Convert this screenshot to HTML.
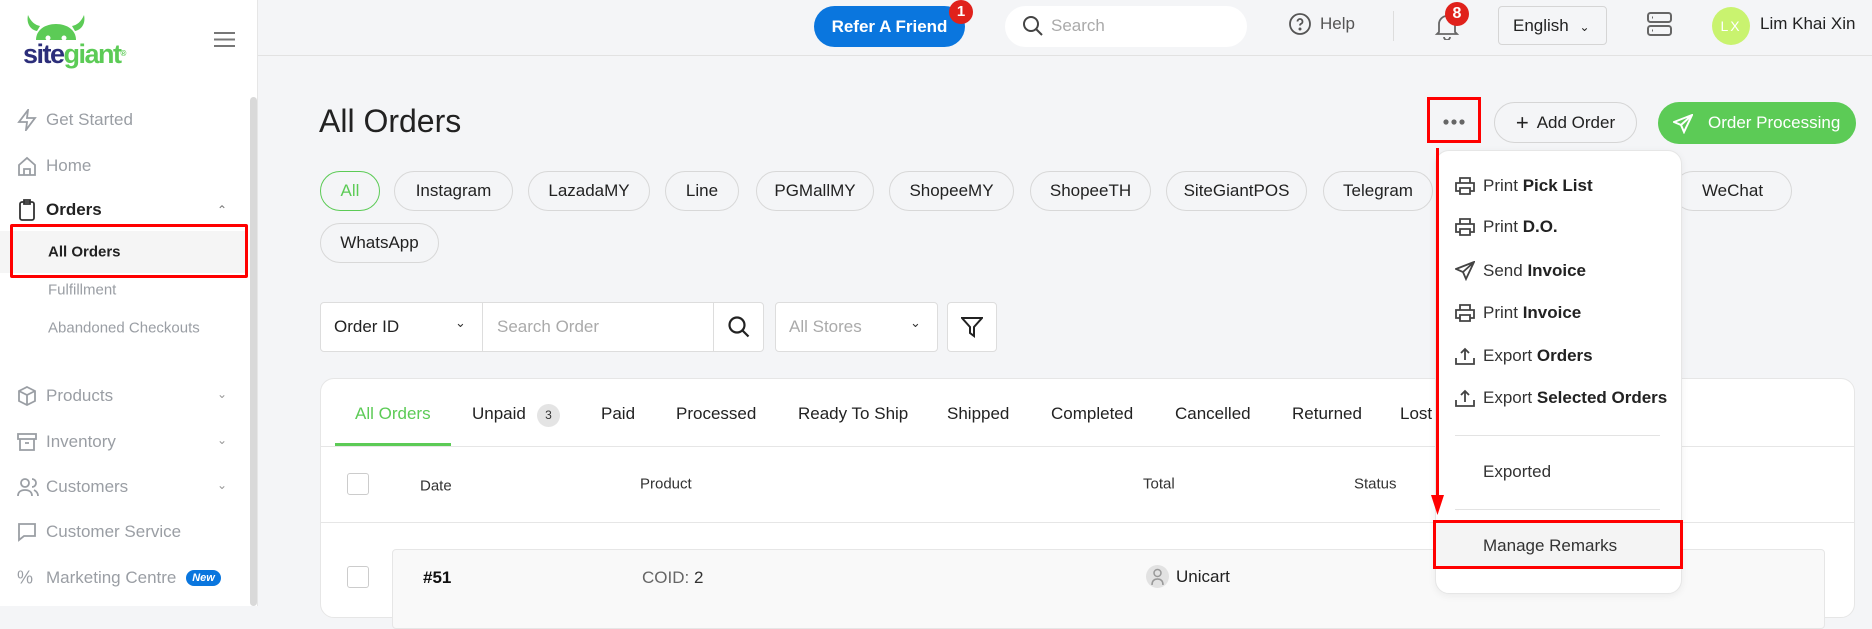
<!DOCTYPE html>
<html><head><meta charset="utf-8"><style>
*{box-sizing:border-box;margin:0;padding:0}
body{width:1872px;height:606px;overflow:hidden;background:#f4f5f7;font-family:"Liberation Sans",sans-serif;color:#222;position:relative}
.abs{position:absolute}
.side{left:0;top:0;width:258px;height:606px;background:#fff;border-right:1px solid #e6e6e6}
.mi{position:absolute;left:46px;font-size:17px;color:#9a9ea4;transform:translateY(-50%)}
.ic{position:absolute;left:17px;transform:translateY(-50%)}
.sub{position:absolute;left:48px;font-size:15px;color:#9a9ea4;transform:translateY(-50%)}
.chev{position:absolute;left:217px;transform:translateY(-50%)}
.chip{position:absolute;height:40px;top:171px;border:1px solid #d8d8d8;border-radius:20px;font-size:17px;line-height:38px;text-align:center;color:#222;background:#f4f5f7}
.tab{position:absolute;top:414px;transform:translateY(-50%);font-size:17px;color:#222}
.th{position:absolute;top:484px;transform:translateY(-50%);font-size:15px;color:#333}
.dd{position:absolute;left:1483px;font-size:17px;color:#333;transform:translateY(-50%)}
.dd b{color:#222}
.di{position:absolute;left:1455px;transform:translateY(-50%)}
.cb{position:absolute;width:22px;height:22px;border:1px solid #ccc;border-radius:3px;background:#fff}
</style></head><body>
<!-- header -->
<div class="abs" style="left:258px;top:0;width:1614px;height:56px;border-bottom:1px solid #e2e2e2;background:#f4f5f7"></div>
<div class="abs" style="left:814px;top:6px;width:151px;height:41px;background:#0a76de;border-radius:21px;color:#fff;font-size:17px;font-weight:bold;line-height:41px;text-align:center">Refer A Friend</div>
<div class="abs" style="left:949px;top:0px;width:24px;height:24px;background:#e0211b;border-radius:50%;color:#fff;font-size:15px;font-weight:bold;text-align:center;line-height:24px">1</div>
<div class="abs" style="left:1005px;top:6px;width:242px;height:41px;background:#fff;border-radius:21px"></div>
<svg class="abs" style="left:1021px;top:14px" width="24" height="24" viewBox="0 0 24 24" fill="none" stroke="#444" stroke-width="2"><circle cx="10" cy="10" r="7"/><path d="M15 15l6 6"/></svg>
<div class="abs" style="left:1051px;top:16px;font-size:17px;color:#aaa">Search</div>
<svg class="abs" style="left:1288px;top:12px" width="24" height="24" viewBox="0 0 24 24" fill="none" stroke="#555" stroke-width="1.8"><circle cx="12" cy="12" r="10"/><path d="M9.5 9.5a2.5 2.5 0 1 1 3.5 2.3c-.7.3-1 .9-1 1.7"/><circle cx="12" cy="17" r=".6" fill="#555"/></svg>
<div class="abs" style="left:1320px;top:14px;font-size:17px;color:#555">Help</div>
<div class="abs" style="left:1393px;top:11px;width:1px;height:30px;background:#ddd"></div>
<svg class="abs" style="left:1434px;top:12px" width="26" height="28" viewBox="0 0 26 28" fill="none" stroke="#666" stroke-width="1.8"><path d="M5 20V12a8 8 0 0 1 16 0v8l2 2H3z"/><path d="M10 25a3 3 0 0 0 6 0"/></svg>
<div class="abs" style="left:1445px;top:2px;width:24px;height:24px;background:#e0211b;border-radius:50%;color:#fff;font-size:16px;font-weight:bold;text-align:center;line-height:24px">8</div>
<div class="abs" style="left:1498px;top:6px;width:109px;height:39px;border:1px solid #d5d5d5;border-radius:4px;font-size:17px;line-height:37px;padding-left:14px;color:#222">English <span style="font-size:12px;margin-left:6px">&#8964;</span></div>
<svg class="abs" style="left:1647px;top:12px" width="25" height="24" viewBox="0 0 25 24" fill="none" stroke="#666" stroke-width="2"><rect x="1" y="1" width="23" height="9" rx="2.5"/><rect x="1" y="14" width="23" height="9" rx="2.5"/><path d="M5 5.5h1M5 18.5h1"/></svg>
<div class="abs" style="left:1712px;top:7px;width:38px;height:38px;border-radius:50%;background:#c9f36f;color:#fff;font-size:14px;line-height:38px;text-align:center;letter-spacing:2px">LX</div>
<div class="abs" style="left:1760px;top:14px;font-size:17px;color:#222">Lim Khai Xin</div>

<!-- sidebar -->
<div class="abs side"></div>
<svg class="abs" style="left:26px;top:14px" width="60" height="40" viewBox="0 0 60 40"><path d="M2 1c-2 9 3 15 9 16l3-5C9 11 5 8 2 1zM58 1c2 9-3 15-9 16l-3-5c5-1 9-4 12-11z" fill="#5ccb56"/><path d="M10 26c0-10 9-16 20-16s20 6 20 16v12H10z" fill="#5ccb56"/><circle cx="22" cy="24" r="2.5" fill="#fff"/><circle cx="38" cy="24" r="2.5" fill="#fff"/></svg>
<div class="abs" style="left:22px;top:40px;font-size:27px;font-weight:bold;letter-spacing:-1.5px;line-height:28px;background:#fff;padding:0 1px"><span style="color:#2c2e7a">site</span><span style="color:#5ccb56">giant</span><span style="color:#5ccb56;font-size:8px;vertical-align:top">®</span></div>
<svg class="abs" style="left:214px;top:32px" width="21" height="15" viewBox="0 0 21 15" stroke="#777" stroke-width="2"><path d="M0 1h21M0 7.5h21M0 14h21"/></svg>
<div class="abs" style="left:250px;top:97px;width:7px;height:509px;background:#d9d9d9;border-radius:4px"></div>

<svg class="ic" style="top:120px" width="20" height="22" viewBox="0 0 20 22" fill="none" stroke="#9a9ea4" stroke-width="1.8"><path d="M11 1L2 13h8l-1 8 9-12h-8z"/></svg>
<div class="mi" style="top:120px">Get Started</div>
<svg class="ic" style="top:166px" width="20" height="20" viewBox="0 0 20 20" fill="none" stroke="#9a9ea4" stroke-width="1.8"><path d="M2 9l8-7 8 7v10H2z"/><path d="M7 19v-6h6v6"/></svg>
<div class="mi" style="top:166px">Home</div>
<svg class="ic" style="top:210px" width="20" height="22" viewBox="0 0 20 22" fill="none" stroke="#333" stroke-width="1.8"><rect x="3" y="3" width="14" height="18" rx="2"/><path d="M7 1h6v4H7z"/></svg>
<div class="mi" style="top:210px;color:#222;font-weight:bold">Orders</div>
<div class="chev" style="top:210px;font-size:12px;color:#777">&#8963;</div>
<div class="abs" style="left:0;top:231px;width:248px;height:42px;background:#f5f5f5"></div>
<div class="abs" style="left:10px;top:224px;width:238px;height:54px;border:3px solid #ff0000;border-radius:2px"></div>
<div class="sub" style="top:252px;color:#222;font-weight:bold">All Orders</div>
<div class="sub" style="top:290px">Fulfillment</div>
<div class="sub" style="top:328px">Abandoned Checkouts</div>

<svg class="ic" style="top:396px" width="20" height="20" viewBox="0 0 20 20" fill="none" stroke="#9a9ea4" stroke-width="1.8"><path d="M10 1l8 4v10l-8 4-8-4V5z"/><path d="M2 5l8 4 8-4M10 9v10"/></svg>
<div class="mi" style="top:396px">Products</div><div class="chev" style="top:394px;font-size:12px;color:#999">&#8964;</div>
<svg class="ic" style="top:442px" width="20" height="20" viewBox="0 0 20 20" fill="none" stroke="#9a9ea4" stroke-width="1.8"><rect x="1" y="2" width="18" height="5"/><path d="M3 7v11h14V7M8 11h4"/></svg>
<div class="mi" style="top:442px">Inventory</div><div class="chev" style="top:440px;font-size:12px;color:#999">&#8964;</div>
<svg class="ic" style="top:487px" width="22" height="20" viewBox="0 0 22 20" fill="none" stroke="#9a9ea4" stroke-width="1.8"><circle cx="8" cy="6" r="4"/><path d="M1 19c0-4 3-6 7-6s7 2 7 6M15 2a4 4 0 0 1 0 8M17 13c2 1 4 3 4 6"/></svg>
<div class="mi" style="top:487px">Customers</div><div class="chev" style="top:485px;font-size:12px;color:#999">&#8964;</div>
<svg class="ic" style="top:532px" width="20" height="20" viewBox="0 0 20 20" fill="none" stroke="#9a9ea4" stroke-width="1.8"><path d="M2 2h16v12H7l-5 4z"/></svg>
<div class="mi" style="top:532px">Customer Service</div>
<div class="ic" style="top:578px;font-size:18px;color:#9a9ea4">%</div>
<div class="mi" style="top:578px">Marketing Centre</div>
<div class="abs" style="left:186px;top:570px;width:35px;height:16px;background:#0a76de;border-radius:8px;color:#fff;font-size:11px;font-weight:bold;line-height:16px;text-align:center;font-style:italic">New</div>

<!-- main -->
<div class="abs" style="left:319px;top:103px;font-size:32px;color:#222">All Orders</div>
<div class="abs" style="left:1427px;top:97px;width:54px;height:46px;border:3px solid #ff0000"></div>
<svg class="abs" style="left:1443px;top:119px" width="22" height="6" viewBox="0 0 22 6" fill="#666"><circle cx="3" cy="3" r="2.6"/><circle cx="11" cy="3" r="2.6"/><circle cx="19" cy="3" r="2.6"/></svg>
<div class="abs" style="left:1494px;top:102px;width:143px;height:41px;border:1px solid #d5d5d5;border-radius:21px;font-size:17px;line-height:39px;text-align:center;color:#222"><span style="font-size:22px;vertical-align:-2px;margin-right:8px">+</span>Add Order</div>
<div class="abs" style="left:1658px;top:102px;width:198px;height:42px;background:#5ccb56;border-radius:21px;color:#fff;font-size:17px;line-height:42px;padding-left:50px">Order Processing</div>
<svg class="abs" style="left:1673px;top:114px" width="20" height="20" viewBox="0 0 20 20" fill="none" stroke="#fff" stroke-width="2"><path d="M19 1L1 8l7 3 3 7zM19 1L8 11"/></svg>

<div class="chip" style="left:320px;width:60px;border-color:#5ccb56;color:#5ccb56">All</div>
<div class="chip" style="left:394px;width:119px">Instagram</div>
<div class="chip" style="left:528px;width:122px">LazadaMY</div>
<div class="chip" style="left:665px;width:74px">Line</div>
<div class="chip" style="left:756px;width:118px">PGMallMY</div>
<div class="chip" style="left:889px;width:125px">ShopeeMY</div>
<div class="chip" style="left:1030px;width:121px">ShopeeTH</div>
<div class="chip" style="left:1166px;width:141px">SiteGiantPOS</div>
<div class="chip" style="left:1323px;width:110px">Telegram</div>
<div class="chip" style="left:1673px;width:119px">WeChat</div>
<div class="chip" style="left:320px;top:223px;width:119px">WhatsApp</div>

<div class="abs" style="left:320px;top:302px;width:444px;height:50px;background:#fff;border:1px solid #ddd;border-radius:4px"></div>
<div class="abs" style="left:482px;top:302px;width:1px;height:50px;background:#ddd"></div>
<div class="abs" style="left:713px;top:302px;width:1px;height:50px;background:#ddd"></div>
<div class="abs" style="left:334px;top:317px;font-size:17px;color:#222">Order ID</div>
<div class="abs" style="left:455px;top:315px;font-size:13px;color:#333">&#8964;</div>
<div class="abs" style="left:497px;top:317px;font-size:17px;color:#aaa">Search Order</div>
<svg class="abs" style="left:727px;top:315px" width="24" height="24" viewBox="0 0 24 24" fill="none" stroke="#222" stroke-width="2.2"><circle cx="10" cy="10" r="7.5"/><path d="M15.5 15.5l6 6"/></svg>
<div class="abs" style="left:775px;top:302px;width:163px;height:50px;background:#fff;border:1px solid #ddd;border-radius:4px"></div>
<div class="abs" style="left:789px;top:317px;font-size:17px;color:#aaa">All Stores</div>
<div class="abs" style="left:910px;top:315px;font-size:13px;color:#333">&#8964;</div>
<div class="abs" style="left:947px;top:302px;width:50px;height:50px;background:#fff;border:1px solid #ddd;border-radius:4px"></div>
<svg class="abs" style="left:961px;top:316px" width="22" height="22" viewBox="0 0 22 22" fill="none" stroke="#222" stroke-width="2"><path d="M1 2h20l-8 9v9l-4-3v-6z"/></svg>

<div class="abs" style="left:320px;top:378px;width:1535px;height:240px;background:#fff;border:1px solid #e6e6e6;border-radius:14px"></div>
<div class="abs" style="left:321px;top:446px;width:1533px;height:1px;background:#e6e6e6"></div>
<div class="abs" style="left:335px;top:443px;width:116px;height:3px;background:#5ccb56"></div>
<div class="tab" style="left:355px;color:#5ccb56">All Orders</div>
<div class="tab" style="left:472px">Unpaid</div>
<div class="abs" style="left:537px;top:404px;width:23px;height:23px;border-radius:50%;background:#e4e4e4;font-size:12px;line-height:23px;text-align:center;color:#333">3</div>
<div class="tab" style="left:601px">Paid</div>
<div class="tab" style="left:676px">Processed</div>
<div class="tab" style="left:798px">Ready To Ship</div>
<div class="tab" style="left:947px">Shipped</div>
<div class="tab" style="left:1051px">Completed</div>
<div class="tab" style="left:1175px">Cancelled</div>
<div class="tab" style="left:1292px">Returned</div>
<div class="tab" style="left:1400px">Lost</div>
<div class="cb" style="left:347px;top:473px"></div>
<div class="th" style="left:420px;top:486px">Date</div>
<div class="th" style="left:640px">Product</div>
<div class="th" style="left:1143px">Total</div>
<div class="th" style="left:1354px">Status</div>
<div class="abs" style="left:321px;top:522px;width:1533px;height:1px;background:#e6e6e6"></div>
<div class="abs" style="left:392px;top:549px;width:1433px;height:80px;background:#f9f9f9;border:1px solid #e6e6e6;border-radius:4px"></div>
<div class="cb" style="left:347px;top:566px"></div>
<div class="abs" style="left:423px;top:568px;font-size:17px;font-weight:bold;color:#111">#51</div>
<div class="abs" style="left:642px;top:568px;font-size:17px;color:#333"><span style="color:#666">COID:</span> 2</div>
<div class="abs" style="left:1146px;top:565px;width:23px;height:23px;border-radius:50%;background:#e2e2e2"></div>
<svg class="abs" style="left:1150px;top:568px" width="15" height="17" viewBox="0 0 15 17" fill="none" stroke="#999" stroke-width="1.5"><circle cx="7.5" cy="5" r="3.5"/><path d="M2 17c0-4 2-6 5.5-6s5.5 2 5.5 6"/></svg>
<div class="abs" style="left:1176px;top:567px;font-size:17px;color:#222">Unicart</div>

<!-- dropdown -->
<div class="abs" style="left:1435px;top:150px;width:247px;height:444px;background:#fff;border:1px solid #e6e6e6;border-radius:14px;box-shadow:0 2px 8px rgba(0,0,0,.06)"></div>
<svg class="di" style="top:186px" width="20" height="18" viewBox="0 0 20 18" fill="none" stroke="#444" stroke-width="1.8"><path d="M5 6V1h10v5M5 14H1V6h18v8h-4M5 11h10v6H5z"/></svg>
<div class="dd" style="top:186px">Print <b>Pick List</b></div>
<svg class="di" style="top:227px" width="20" height="18" viewBox="0 0 20 18" fill="none" stroke="#444" stroke-width="1.8"><path d="M5 6V1h10v5M5 14H1V6h18v8h-4M5 11h10v6H5z"/></svg>
<div class="dd" style="top:227px">Print <b>D.O.</b></div>
<svg class="di" style="top:271px" width="20" height="20" viewBox="0 0 20 20" fill="none" stroke="#444" stroke-width="1.8"><path d="M19 1L1 8l7 3 3 7zM19 1L8 11"/></svg>
<div class="dd" style="top:271px">Send <b>Invoice</b></div>
<svg class="di" style="top:313px" width="20" height="18" viewBox="0 0 20 18" fill="none" stroke="#444" stroke-width="1.8"><path d="M5 6V1h10v5M5 14H1V6h18v8h-4M5 11h10v6H5z"/></svg>
<div class="dd" style="top:313px">Print <b>Invoice</b></div>
<svg class="di" style="top:356px" width="20" height="18" viewBox="0 0 20 18" fill="none" stroke="#444" stroke-width="1.8"><path d="M1 11v6h18v-6M10 13V2M6 6l4-4 4 4"/></svg>
<div class="dd" style="top:356px">Export <b>Orders</b></div>
<svg class="di" style="top:398px" width="20" height="18" viewBox="0 0 20 18" fill="none" stroke="#444" stroke-width="1.8"><path d="M1 11v6h18v-6M10 13V2M6 6l4-4 4 4"/></svg>
<div class="dd" style="top:398px">Export <b>Selected Orders</b></div>
<div class="abs" style="left:1455px;top:435px;width:205px;height:1px;background:#e3e3e3"></div>
<div class="dd" style="top:472px">Exported</div>
<div class="abs" style="left:1455px;top:509px;width:205px;height:1px;background:#e3e3e3"></div>
<div class="abs" style="left:1436px;top:522px;width:245px;height:46px;background:#f4f4f4"></div>
<div class="abs" style="left:1433px;top:520px;width:250px;height:49px;border:3px solid #ff0000"></div>
<div class="dd" style="top:546px">Manage Remarks</div>
<div class="abs" style="left:1436px;top:148px;width:3px;height:352px;background:#ff0000"></div>
<svg class="abs" style="left:1431px;top:495px" width="13" height="20" viewBox="0 0 13 20"><path d="M0 0h13L6.5 20z" fill="#ff0000"/></svg>
</body></html>
